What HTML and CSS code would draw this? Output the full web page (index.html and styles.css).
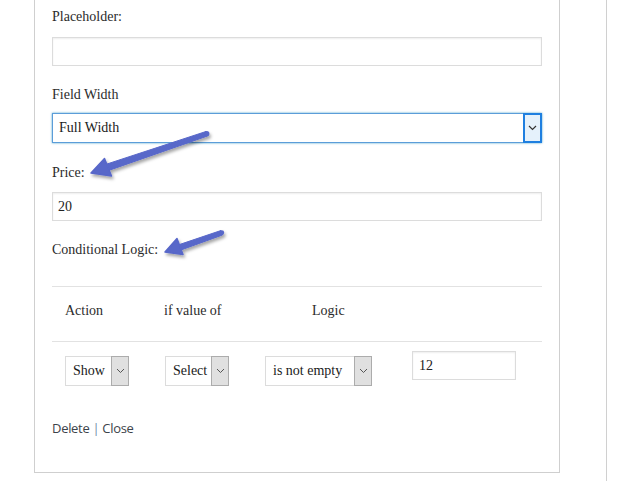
FILE: index.html
```html
<!DOCTYPE html>
<html>
<head>
<meta charset="utf-8">
<link rel="stylesheet" href="styles.css">
</head>
<body>
<div class="page">
  <div class="panel">
    <div class="label first">Placeholder:</div>
    <input class="field field-a" type="text" value="">
    <div class="label after-field">Field Width</div>
    <div class="select select-wide focus">
      <span class="sel-text">Full Width</span>
      <span class="sel-btn"><svg width="9" height="6" viewBox="0 0 9 6"><path d="M1 1 L4.5 4.5 L8 1" fill="none" stroke="#333" stroke-width="1.2"/></svg></span>
    </div>
    <div class="label after-select">Price:</div>
    <input class="field field-b" type="text" value="20">
    <div class="label after-price lower">Conditional Logic:</div>
    <div class="rule rule-top"></div>
    <div class="grid head">
      <div class="th th-action">Action</div>
      <div class="th th-if">if value of</div>
      <div class="th th-logic">Logic</div>
      <div class="th"></div>
    </div>
    <div class="rule"></div>
    <div class="grid row">
      <div class="td">
        <div class="select small w-show">
          <span class="sel-text">Show</span>
          <span class="sel-btn"><svg width="9" height="6" viewBox="0 0 9 6"><path d="M1 1 L4.5 4.5 L8 1" fill="none" stroke="#555" stroke-width="1"/></svg></span>
        </div>
      </div>
      <div class="td">
        <div class="select small w-select">
          <span class="sel-text">Select</span>
          <span class="sel-btn"><svg width="9" height="6" viewBox="0 0 9 6"><path d="M1 1 L4.5 4.5 L8 1" fill="none" stroke="#555" stroke-width="1"/></svg></span>
        </div>
      </div>
      <div class="td">
        <div class="select small w-logic">
          <span class="sel-text">is not empty</span>
          <span class="sel-btn"><svg width="9" height="6" viewBox="0 0 9 6"><path d="M1 1 L4.5 4.5 L8 1" fill="none" stroke="#555" stroke-width="1"/></svg></span>
        </div>
      </div>
      <div class="td td-value">
        <input class="field field-c" type="text" value="12">
      </div>
    </div>
    <div class="links"><span class="link">Delete</span><span class="sep">|</span><span class="link">Close</span></div>
  </div>
  <div class="side-line"></div>
</div>
<svg class="arrows" width="627" height="481" viewBox="0 0 627 481">
  <defs>
    <filter id="sh" x="-20%" y="-40%" width="140%" height="180%">
      <feDropShadow dx="1.5" dy="2.5" stdDeviation="1.6" flood-color="#000" flood-opacity="0.35"/>
    </filter>
  </defs>
  <g filter="url(#sh)" fill="#5867c9" stroke="#5867c9" stroke-linejoin="round">
    <path d="M206 131.5 L107 164 L108.5 170.5 L207.5 136 Z" stroke-width="1"/>
    <circle cx="206.8" cy="133.7" r="2.6" stroke="none"/>
    <path d="M91 173 L104.5 158.5 L111.5 176 Z" stroke-width="1.5"/>
    <path d="M221 230.5 L178 245 L179.5 250.5 L222.5 235 Z" stroke-width="1"/>
    <circle cx="221.8" cy="232.7" r="2.4" stroke="none"/>
    <path d="M165 252 L177 238.5 L183 254.5 Z" stroke-width="1.5"/>
  </g>
</svg>
</body>
</html>
```
FILE: styles.css
```css
html, body {
  margin: 0;
  padding: 0;
  background: #ffffff;
}

body {
  font-family: "Liberation Serif", "Times New Roman", serif;
  font-size: 14px;
  color: #2b2b2b;
}

.page {
  display: flex;
  align-items: flex-start;
  height: 481px;
  overflow: hidden;
}

.panel {
  box-sizing: border-box;
  width: 526px;
  height: 473px;
  margin-left: 34px;
  padding: 0 17px;
  border: 1px solid #cfcfcf;
  border-top: none;
  display: flex;
  flex-direction: column;
  align-items: stretch;
}

.side-line {
  width: 1px;
  height: 481px;
  margin-left: 46px;
  background: #d0d0d0;
}

.label {
  box-sizing: border-box;
  line-height: 20px;
  height: 20px;
  padding-top: 1px;
}

.label.lower {
  padding-top: 2px;
}

.label.first { margin-top: 6px; }
.label.after-field { margin-top: 18px; }
.label.after-select { margin-top: 19px; }
.label.after-price { margin-top: 17px; }

.field {
  box-sizing: border-box;
  display: block;
  margin: 0;
  border: 1px solid #dcdcdc;
  box-shadow: inset 0 1px 2px rgba(0, 0, 0, 0.07);
  background: #fff;
  font-family: "Liberation Serif", "Times New Roman", serif;
  font-size: 14px;
  color: #222;
  padding: 0 5px;
  outline: none;
}

.field-a {
  width: 490px;
  height: 29px;
  margin-top: 11px;
}

.field-b {
  width: 490px;
  height: 29px;
  margin-top: 10px;
}

.field-c {
  width: 104px;
  height: 29px;
  padding-left: 6px;
}

.select {
  box-sizing: border-box;
  display: flex;
  align-items: stretch;
  border: 1px solid #dcdcdc;
  background: #fff;
  color: #1a1a1a;
}

.sel-text {
  flex: 1;
  display: flex;
  align-items: center;
  padding-left: 7px;
  white-space: nowrap;
}

.sel-btn {
  box-sizing: border-box;
  width: 18px;
  margin: -1px -1px -1px 0;
  display: flex;
  align-items: center;
  justify-content: center;
  background: #e0e0e0;
  border: 1px solid #acacac;
}

.select-wide {
  width: 490px;
  height: 30px;
  margin-top: 9px;
}

.select.focus {
  border-color: #5b9dd9;
  box-shadow: 0 0 2px rgba(30, 140, 190, 0.8);
}

.select.focus .sel-text {
  padding-left: 6px;
}

.select.focus .sel-btn {
  background: #e5f1fb;
  border: 2px solid #1f7fe0;
  width: 19px;
}

.select.small {
  height: 30px;
  margin-top: 14px;
}

.w-show { width: 64px; }
.w-select { width: 64px; }
.w-logic { width: 107px; }

.rule {
  height: 1px;
  background: #e2e2e2;
}

.rule-top { margin-top: 28px; }

.grid {
  display: grid;
  grid-template-columns: 100px 100px 147px 143px;
}

.head {
  padding: 14px 0 20px;
  line-height: 20px;
}

.th-action { padding-left: 13px; }
.th-if { padding-left: 12px; }
.th-logic { padding-left: 60px; }

.td {
  padding-left: 13px;
  display: flex;
  align-items: flex-start;
}

.td-value {
  padding-top: 9px;
}

.links {
  margin-top: 32px;
  font-family: "Open Sans", "Noto Sans", sans-serif;
  font-size: 13px;
  letter-spacing: -0.3px;
  line-height: 20px;
  color: #3c434a;
}

.sep {
  color: #6f8aa6;
  margin: 0 3px;
}

.arrows {
  position: absolute;
  left: 0;
  top: 0;
  pointer-events: none;
}
```
